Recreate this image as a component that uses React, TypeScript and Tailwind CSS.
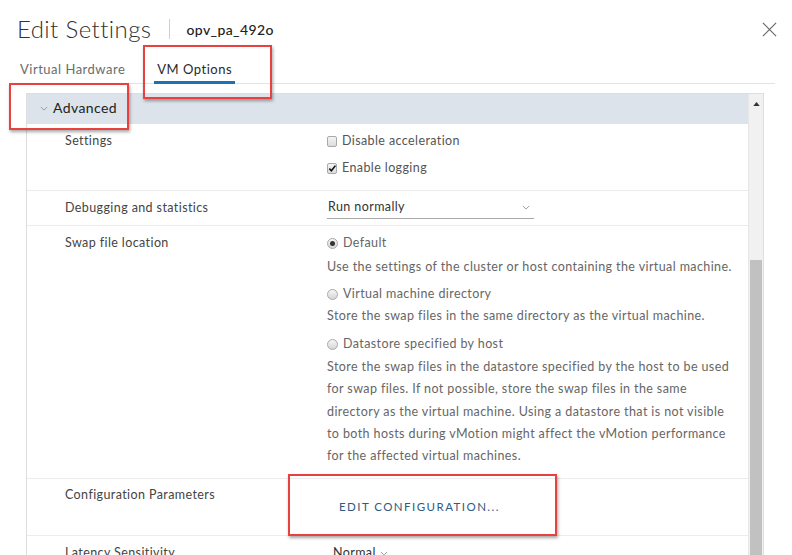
import React from 'react';

function Checkbox({ checked }: { checked?: boolean }) {
  return (
    <span className="relative inline-block w-[10px] h-[11px] rounded-[2px] border border-[#a9a9a9] bg-gradient-to-b from-[#f4f4f4] to-[#dcdcdc] mr-[5px]">
      {checked && (
        <svg viewBox="0 0 10 10" className="absolute left-[0px] top-[0px] w-[9px] h-[9px]">
          <path d="M1.5 5.2 L3.8 7.5 L8.2 1.8" fill="none" stroke="#111" strokeWidth="1.8" />
        </svg>
      )}
    </span>
  );
}

function Radio({ checked }: { checked?: boolean }) {
  return (
    <span className="relative inline-flex items-center justify-center w-[11px] h-[11px] rounded-full border border-[#a9a9a9] bg-gradient-to-b from-[#f6f6f6] to-[#d6d6d6] mr-[5px]">
      {checked && <span className="w-[5px] h-[5px] rounded-full bg-[#333]" />}
    </span>
  );
}

function Chevron({ className }: { className?: string }) {
  return (
    <svg viewBox="0 0 10 6" className={className}>
      <path d="M1 1 L5 5 L9 1" fill="none" stroke="currentColor" strokeWidth="1" />
    </svg>
  );
}

const redBox = 'absolute border-2 border-[#e8413f] shadow-[1px_2px_3px_rgba(0,0,0,0.35)] pointer-events-none';

export default function App() {
  return (
    <div className="relative w-[792px] h-[555px] overflow-hidden bg-white text-[#333] font-['Lato','Open_Sans',sans-serif] tracking-[0.4px]">
      {/* header */}
      <div className="flex items-center h-[30px] mt-[14px] pl-[17px] pr-[15px]">
        <h1 className="text-[24px] font-light text-[#313131] leading-[30px] tracking-[0.4px]">Edit Settings</h1>
        <div className="w-px h-[20px] bg-[#cfcfcf] ml-[18px] mr-[16px]" />
        <span className="text-[14px] text-[#222] font-medium">opv_pa_492o</span>
        <div className="flex-1" />
        <svg viewBox="0 0 16 16" className="w-[15px] h-[15px] text-[#6a6a6a]">
          <path d="M1 1 L15 15 M15 1 L1 15" stroke="currentColor" strokeWidth="1.3" fill="none" />
        </svg>
      </div>

      {/* tabs */}
      <div className="flex items-end h-[31px] mt-[9px] mx-[17px] border-b border-[#e3e3e3] text-[13px] tracking-[0.5px]">
        <div className="px-[3px] h-[30px] pt-[3px] flex items-center text-[#6b6b6b]">Virtual Hardware</div>
        <div className="ml-[26px] px-[3px] h-[30px] flex items-center text-[#2a2a2a] border-b-[3px] border-[#1b73b3] pt-[5px] -mb-px">
          VM Options
        </div>
      </div>

      {/* panel */}
      <div className="flex ml-[26px] w-[738px] h-[470px] mt-[9px] border-t border-l border-r border-[#dedede] overflow-hidden">
        <div className="flex-1 flex flex-col text-[12.5px]">
          <div className="flex shrink-0 items-center h-[30px] bg-[#dce3ea] pl-[13px] pb-[3px]">
            <Chevron className="w-[8px] h-[5px] text-[#8a8a8a] mr-[5px] mt-[2px]" />
            <span className="text-[14px] text-[#222]">Advanced</span>
          </div>

          {/* Settings */}
          <div className="flex shrink-0 pt-[6px] pb-[11px] border-b border-[#ececec]">
            <div className="w-[300px] pl-[38px] leading-[22px] text-[#444]">Settings</div>
            <div className="flex flex-col text-[#555]">
              <div className="h-[22px] flex items-center">
                <Checkbox />Disable acceleration
              </div>
              <div className="h-[22px] flex items-center mt-[5px]">
                <Checkbox checked />Enable logging
              </div>
            </div>
          </div>

          {/* Debugging */}
          <div className="flex shrink-0 pt-[6px] pb-[6px] border-b border-[#ececec]">
            <div className="w-[300px] pl-[38px] leading-[22px] text-[#444]">Debugging and statistics</div>
            <div className="w-[207px] h-[22px] flex items-center justify-between border-b border-[#a9a9a9] text-[#333] pl-[1px] pr-[4px]">
              <span>Run normally</span>
              <Chevron className="w-[8px] h-[5px] text-[#888]" />
            </div>
          </div>

          {/* Swap */}
          <div className="flex shrink-0 pt-[6px] pb-[11px] border-b border-[#ececec]">
            <div className="w-[300px] pl-[38px] leading-[22px] text-[#444]">Swap file location</div>
            <div className="flex flex-col leading-[22px] text-[#666]">
              <div className="flex items-center h-[22px]">
                <Radio checked />Default
              </div>
              <div className="mt-[2px]">Use the settings of the cluster or host containing the virtual machine.</div>
              <div className="flex items-center h-[22px] mt-[5px]">
                <Radio />Virtual machine directory
              </div>
              <div>Store the swap files in the same directory as the virtual machine.</div>
              <div className="flex items-center h-[22px] mt-[6px]">
                <Radio />Datastore specified by host
              </div>
              <div className="w-[408px] mt-[1px] leading-[22.3px]">
                Store the swap files in the datastore specified by the host to be used for swap files. If not possible, store the swap files in the same directory as the virtual machine. Using a datastore that is not visible to both hosts during vMotion might affect the vMotion performance for the affected virtual machines.
              </div>
            </div>
          </div>

          {/* Config */}
          <div className="flex shrink-0 pb-[17px] border-b border-[#ececec]">
            <div className="w-[300px] pl-[38px] pt-[5px] leading-[22px] text-[#444]">Configuration Parameters</div>
            <div className="pt-[17px] pl-[12px] leading-[22px] text-[11.5px] tracking-[1.45px] text-[#2f5a82]">
              EDIT CONFIGURATION...
            </div>
          </div>

          {/* Latency */}
          <div className="flex shrink-0 pt-[6px]">
            <div className="w-[300px] pl-[38px] leading-[22px] text-[#444]">Latency Sensitivity</div>
            <div className="flex items-center h-[22px] pl-[6px] text-[#333]">
              Normal
              <Chevron className="w-[8px] h-[5px] text-[#888] ml-[4px]" />
            </div>
          </div>
        </div>

        {/* scrollbar */}
        <div className="w-[15px] shrink-0 bg-[#f1f1f1] border-l border-[#e6e6e6] flex flex-col items-center">
          <svg viewBox="0 0 8 5" className="w-[7px] h-[4px] mt-[8px] text-[#333]">
            <path d="M0 5 L4 0 L8 5 Z" fill="currentColor" />
          </svg>
          <div className="w-[12px] bg-[#c1c1c1] mt-[154px] flex-1" />
        </div>
      </div>

      {/* annotations */}
      <div className={`${redBox} left-[143px] top-[45px] w-[129px] h-[54px]`} />
      <div className={`${redBox} left-[9px] top-[83px] w-[120px] h-[47px]`} />
      <div className={`${redBox} left-[288px] top-[474px] w-[269px] h-[62px]`} />
    </div>
  );
}
